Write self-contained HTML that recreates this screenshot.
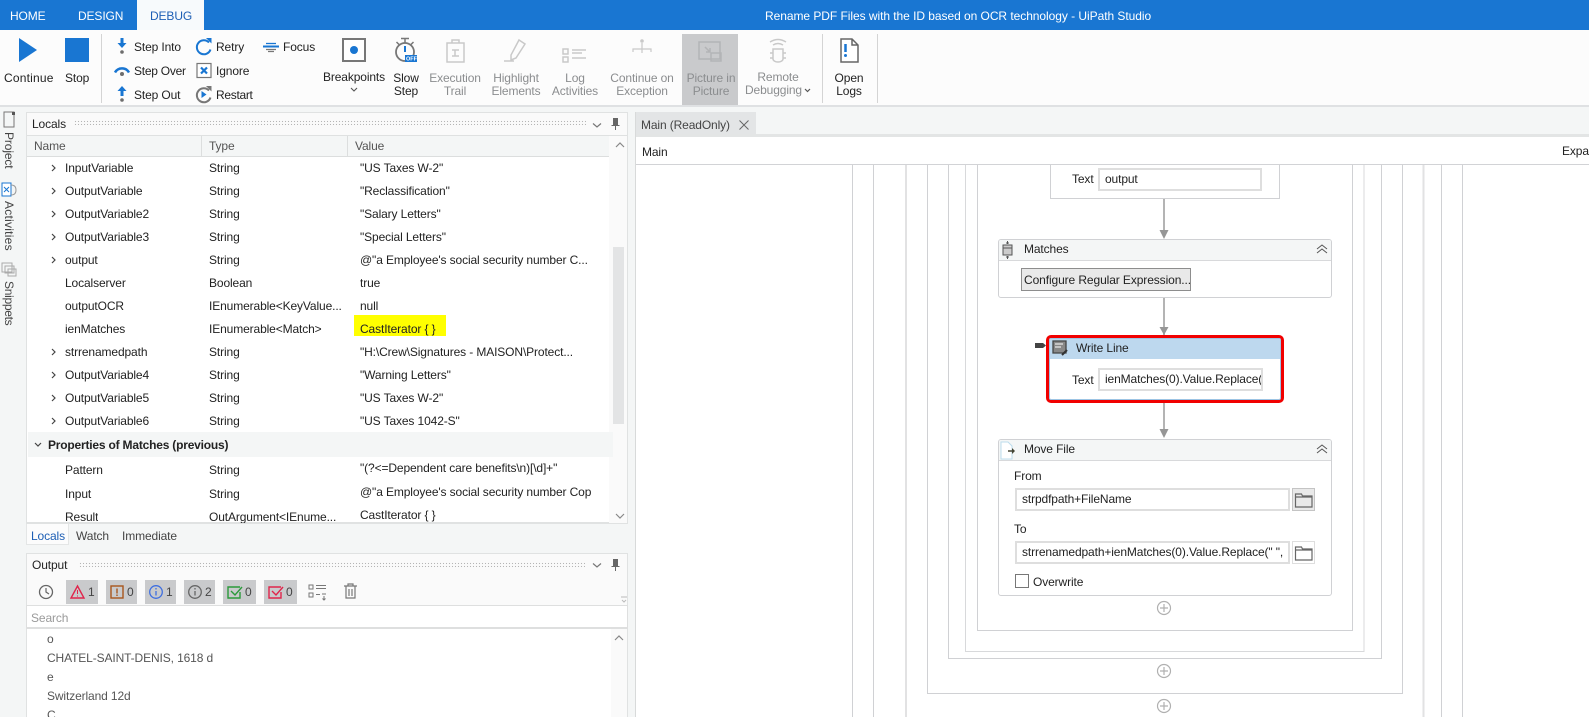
<!DOCTYPE html>
<html><head><meta charset="utf-8"><style>
html,body{margin:0;padding:0;width:1589px;height:717px;overflow:hidden;background:#f4f6f6}
body{position:relative;font-family:"Liberation Sans",sans-serif;font-size:12px;color:#222}
.t{position:absolute;white-space:nowrap;line-height:16px;letter-spacing:-.12px}
.c{transform:translateX(-50%);text-align:center;line-height:13px}
.d{color:#8b8d8f}
.b{position:absolute}
.g{position:absolute;height:5px;background-image:radial-gradient(#b5b5b5 .6px,transparent .8px);background-size:3px 3px}
svg{position:absolute;left:0;top:0}
.in{position:absolute;background:#fff;border:2px solid #dedede;box-sizing:border-box;overflow:hidden;white-space:nowrap;line-height:19px;padding-left:5px;letter-spacing:-.12px}
.tb{position:absolute;top:580px;height:24px;background:#c9cacc}
</style></head><body>
<!-- title -->
<div class="b" style="left:0;top:0;width:1589px;height:30px;background:#1976d2"></div>
<div class="b" style="left:137px;top:0;width:67px;height:30px;background:#f7fafc"></div>
<div class="t" style="left:10px;top:8px;color:#fff">HOME</div>
<div class="t" style="left:78px;top:8px;color:#fff">DESIGN</div>
<div class="t" style="left:150px;top:8px;color:#1e5fb5">DEBUG</div>
<div class="t" style="left:765px;top:8px;color:#fff;letter-spacing:-.05px">Rename PDF Files with the ID based on OCR technology - UiPath Studio</div>
<!-- ribbon -->
<div class="b" style="left:0;top:30px;width:1589px;height:75px;background:#fcfcfc;border-bottom:2px solid #dfe1e3"></div>
<div class="b" style="left:682px;top:34px;width:56px;height:71px;background:#c9cacc"></div>
<div class="b" style="left:101px;top:34px;width:1px;height:69px;background:#d4d4d4"></div>
<div class="b" style="left:822px;top:34px;width:1px;height:69px;background:#d4d4d4"></div>
<div class="b" style="left:877px;top:34px;width:1px;height:69px;background:#d4d4d4"></div>

<div class="t" style="left:4px;top:70px;letter-spacing:.2px">Continue</div>
<div class="t" style="left:65px;top:70px">Stop</div>
<div class="t" style="left:134px;top:39px">Step Into</div>
<div class="t" style="left:134px;top:63px;letter-spacing:-.25px">Step Over</div>
<div class="t" style="left:134px;top:87px">Step Out</div>
<div class="t" style="left:216px;top:39px">Retry</div>
<div class="t" style="left:216px;top:63px">Ignore</div>
<div class="t" style="left:216px;top:87px;letter-spacing:-.3px">Restart</div>
<div class="t" style="left:283px;top:39px">Focus</div>
<div class="t c" style="left:354px;top:71px">Breakpoints</div>
<div class="t c" style="left:406px;top:72px">Slow<br>Step</div>
<div class="t c d" style="left:455px;top:72px">Execution<br>Trail</div>
<div class="t c d" style="left:516px;top:72px">Highlight<br>Elements</div>
<div class="t c d" style="left:575px;top:72px">Log<br>Activities</div>
<div class="t c d" style="left:642px;top:72px">Continue on<br>Exception</div>
<div class="t c d" style="left:711px;top:72px">Picture in<br>Picture</div>
<div class="t c d" style="left:778px;top:71px">Remote</div>
<div class="t d" style="left:745px;top:84px;line-height:13px">Debugging</div>
<div class="t c" style="left:849px;top:72px">Open<br>Logs</div>

<!-- left strip labels -->
<div class="t" style="left:1px;top:132px;writing-mode:vertical-rl;line-height:16px;color:#444">Project</div>
<div class="t" style="left:1px;top:201px;writing-mode:vertical-rl;line-height:16px;color:#444;letter-spacing:.25px">Activities</div>
<div class="t" style="left:1px;top:281px;writing-mode:vertical-rl;line-height:16px;color:#444;letter-spacing:-.3px">Snippets</div>

<!-- Locals panel -->
<div class="b" style="left:26px;top:112px;width:602px;height:412px;background:#fff;box-sizing:border-box;border:1px solid #e0e2e2;border-width:1px 1px 2px 1px"></div>
<div class="b" style="left:27px;top:113px;width:600px;height:22px;background:#fafafa;border-bottom:1px solid #dfe1e1"></div>
<div class="t" style="left:32px;top:116px">Locals</div>
<div class="g" style="left:74px;top:120px;width:512px"></div>
<div class="b" style="left:27px;top:136px;width:582px;height:20px;background:#f4f6f6;border-bottom:1px solid #dcdede"></div>
<div class="b" style="left:201px;top:136px;width:1px;height:20px;background:#dcdede"></div>
<div class="b" style="left:347px;top:136px;width:1px;height:20px;background:#dcdede"></div>
<div class="t" style="left:34px;top:138px;color:#555">Name</div>
<div class="t" style="left:209px;top:138px;color:#555">Type</div>
<div class="t" style="left:355px;top:138px;color:#555">Value</div>
<div class="b" style="left:609px;top:136px;width:18px;height:387px;background:#fafafa"></div>
<div class="b" style="left:613px;top:247px;width:11px;height:177px;background:#e3e4e5"></div>
<div class="b" style="left:354px;top:315px;width:92px;height:21px;background:#ffff00"></div>
<div class="b" style="left:28px;top:432px;width:585px;height:25px;background:#f4f6f6"></div>

<div class="t" style="left:65px;top:160px">InputVariable</div><div class="t" style="left:209px;top:160px">String</div><div class="t" style="left:360px;top:160px">"US Taxes W-2"</div>
<div class="t" style="left:65px;top:183px">OutputVariable</div><div class="t" style="left:209px;top:183px">String</div><div class="t" style="left:360px;top:183px">"Reclassification"</div>
<div class="t" style="left:65px;top:206px">OutputVariable2</div><div class="t" style="left:209px;top:206px">String</div><div class="t" style="left:360px;top:206px">"Salary Letters"</div>
<div class="t" style="left:65px;top:229px">OutputVariable3</div><div class="t" style="left:209px;top:229px">String</div><div class="t" style="left:360px;top:229px">"Special Letters"</div>
<div class="t" style="left:65px;top:252px">output</div><div class="t" style="left:209px;top:252px">String</div><div class="t" style="left:360px;top:252px">@"a Employee's social security number C...</div>
<div class="t" style="left:65px;top:275px">Localserver</div><div class="t" style="left:209px;top:275px">Boolean</div><div class="t" style="left:360px;top:275px">true</div>
<div class="t" style="left:65px;top:298px">outputOCR</div><div class="t" style="left:209px;top:298px">IEnumerable&lt;KeyValue...</div><div class="t" style="left:360px;top:298px">null</div>
<div class="t" style="left:65px;top:321px">ienMatches</div><div class="t" style="left:209px;top:321px">IEnumerable&lt;Match&gt;</div><div class="t" style="left:360px;top:321px">CastIterator { }</div>
<div class="t" style="left:65px;top:344px">strrenamedpath</div><div class="t" style="left:209px;top:344px">String</div><div class="t" style="left:360px;top:344px">"H:\Crew\Signatures - MAISON\Protect...</div>
<div class="t" style="left:65px;top:367px">OutputVariable4</div><div class="t" style="left:209px;top:367px">String</div><div class="t" style="left:360px;top:367px">"Warning Letters"</div>
<div class="t" style="left:65px;top:390px">OutputVariable5</div><div class="t" style="left:209px;top:390px">String</div><div class="t" style="left:360px;top:390px">"US Taxes W-2"</div>
<div class="t" style="left:65px;top:413px">OutputVariable6</div><div class="t" style="left:209px;top:413px">String</div><div class="t" style="left:360px;top:413px">"US Taxes 1042-S"</div>
<div class="t" style="left:48px;top:437px;font-weight:bold;letter-spacing:-.2px">Properties of Matches (previous)</div>
<div class="t" style="left:65px;top:462px">Pattern</div><div class="t" style="left:209px;top:462px">String</div><div class="t" style="left:360px;top:460px">"(?&lt;=Dependent care benefits\n)[\d]+"</div>
<div class="t" style="left:65px;top:486px">Input</div><div class="t" style="left:209px;top:486px">String</div><div class="t" style="left:360px;top:484px;width:231px;overflow:hidden">@"a Employee's social security number Copy</div>
<div class="t" style="left:65px;top:509px;height:14px;overflow:hidden">Result</div><div class="t" style="left:209px;top:509px;height:14px;overflow:hidden">OutArgument&lt;IEnume...</div><div class="t" style="left:360px;top:507px">CastIterator { }</div>

<!-- Locals tabs -->
<div class="b" style="left:26px;top:524px;width:43px;height:21px;background:#fcfcfc;border:1px solid #e4e6e6;border-top:0;box-sizing:border-box"></div>
<div class="t" style="left:31px;top:528px;color:#1e5fb5">Locals</div>
<div class="t" style="left:76px;top:528px;color:#444">Watch</div>
<div class="t" style="left:122px;top:528px;color:#444">Immediate</div>

<!-- Output -->
<div class="b" style="left:26px;top:553px;width:602px;height:164px;background:#fff;box-sizing:border-box;border:1px solid #e0e2e2;border-bottom:0"></div>
<div class="b" style="left:27px;top:554px;width:600px;height:51px;background:#fafafa"></div>
<div class="t" style="left:32px;top:557px">Output</div>
<div class="g" style="left:79px;top:562px;width:506px"></div>
<div class="tb" style="left:66px;width:32px"></div><div class="tb" style="left:106px;width:31px"></div><div class="tb" style="left:145px;width:31px"></div><div class="tb" style="left:184px;width:31px"></div><div class="tb" style="left:223px;width:33px"></div><div class="tb" style="left:264px;width:33px"></div>
<div class="t" style="left:88px;top:584px;color:#444">1</div>
<div class="t" style="left:127px;top:584px;color:#444">0</div>
<div class="t" style="left:166px;top:584px;color:#444">1</div>
<div class="t" style="left:205px;top:584px;color:#444">2</div>
<div class="t" style="left:245px;top:584px;color:#444">0</div>
<div class="t" style="left:286px;top:584px;color:#444">0</div>
<div class="b" style="left:26px;top:605px;width:602px;height:24px;background:#fff;border:2px solid #dedfdf;border-width:1px 1px 2px 1px;box-sizing:border-box"></div>
<div class="t" style="left:31px;top:610px;color:#9a9a9a">Search</div>
<div class="b" style="left:611px;top:629px;width:16px;height:88px;background:#fafafa"></div>
<div class="t" style="left:47px;top:631px;color:#555">o</div>
<div class="t" style="left:47px;top:650px;color:#555">CHATEL-SAINT-DENIS, 1618 d</div>
<div class="t" style="left:47px;top:669px;color:#555">e</div>
<div class="t" style="left:47px;top:688px;color:#555">Switzerland 12d</div>
<div class="t" style="left:47px;top:707px;color:#555">C</div>

<!-- Designer -->
<div class="b" style="left:635px;top:112px;width:954px;height:605px;background:#fff;border-left:1px solid #d8dada;box-sizing:border-box"></div>
<div class="b" style="left:636px;top:112px;width:953px;height:22px;background:#f4f6f6"></div>
<div class="b" style="left:636px;top:112px;width:120px;height:22px;background:#e3e5e6"></div>
<div class="b" style="left:636px;top:134px;width:953px;height:3px;background:#e3e5e5"></div>
<div class="t" style="left:641px;top:117px;color:#444">Main (ReadOnly)</div>
<div class="t" style="left:642px;top:144px">Main</div>
<div class="t" style="left:1562px;top:143px">Expan</div>
<div class="b" style="left:636px;top:164px;width:953px;height:1px;background:#d2d3d6"></div>

<svg width="1589" height="717" viewBox="0 0 1589 717" fill="none">
 <!-- nesting lines -->
 <g stroke="#d0d1d4" shape-rendering="crispEdges">
  <path d="M852.5 165V717M873.5 165V717M927.5 165V693.5H1402.5V165M948.5 165V658.5H1381.5V165M977.5 165V630.5H1352.5V165M1441.5 165V717M1462.5 165V717"/>
  <path d="M965.5 165V651.5H1364V165" stroke="#d8d9db"/>
  <path d="M1050.5 165V198.5H1279.5V165"/>
 </g>
 <g stroke="#e2e2e3" stroke-width="2" shape-rendering="crispEdges">
  <path d="M906 165V717M1423.5 165V717"/>
 </g>
 <!-- connectors -->
 <g stroke="#b4b4b4" stroke-width="2" shape-rendering="crispEdges"><path d="M1164 199V231M1164 298V335M1164 402V430"/></g>
 <g fill="#969696"><path d="M1159.500 230H1168.500L1164 239zM1159.500 429H1168.500L1164 438zM1159.500 327H1168.500L1164 335z"/></g>
 <!-- plus -->
 <g stroke="#b0b0b0" stroke-width="1.200">
  <circle cx="1164" cy="608" r="6.500"/><path d="M1160 608h8M1164 604v8"/>
  <circle cx="1164" cy="671" r="6.500"/><path d="M1160 671h8M1164 667v8"/>
  <circle cx="1164" cy="706" r="6.500"/><path d="M1160 706h8M1164 702v8"/>
 </g>

 <!-- ribbon icons -->
 <path d="M19 38L37 50L19 62z" fill="#1976d2"/>
 <rect x="65" y="38" width="24" height="24" fill="#1976d2"/>
 <g fill="#1976d2">
  <path d="M120.500 38h3v5h3l-4.500 5-4.500-5h3z"/><circle cx="122" cy="52" r="1.800" fill="#6d6d6d"/>
  <path d="M122 86l4.500 5h-3v5h-3v-5h-3z"/><circle cx="122" cy="100" r="1.800" fill="#6d6d6d"/>
  <circle cx="122" cy="74" r="2" fill="#6d6d6d"/>
 </g>
 <path d="M115 72.500a8 8 0 0 1 14 0" stroke="#1976d2" stroke-width="2.500"/>
 <path d="M209 42.500a7 7 0 1 0 1.500 7" stroke="#1976d2" stroke-width="2"/><path d="M206 38h5.500v5.500z" fill="#1976d2"/>
 <rect x="197" y="63.500" width="14" height="14" stroke="#777" stroke-width="1.200" fill="#fff"/>
 <path d="M201 67.500l6 6M207 67.500l-6 6" stroke="#1976d2" stroke-width="2.200"/>
 <path d="M209 90.500a7 7 0 1 0 1.500 7" stroke="#777" stroke-width="2"/><path d="M206 86h5.500v5.500z" fill="#777"/><path d="M201.500 91l5 3.500-5 3.500z" fill="#1976d2"/>
 <g stroke="#1976d2" stroke-width="1.300"><path d="M266 43.500h10"/><path d="M263 46.500h16" stroke-width="2"/><path d="M266 49.500h10M268 51.500h6" stroke="#777"/></g>
 <rect x="343" y="39" width="22" height="22" stroke="#777" stroke-width="2" fill="#fff"/><circle cx="354" cy="50" r="4" fill="#1976d2"/>
 <path d="M351 88l3 3 3-3" stroke="#555" stroke-width="1.100"/>
 <circle cx="405" cy="52" r="9" stroke="#777" stroke-width="1.800"/><path d="M401 38.500h8M405 39v4M396.500 42l2.500 2.500M413.500 42l-2.500 2.500" stroke="#777" stroke-width="1.500"/><path d="M405 46v6" stroke="#1976d2" stroke-width="2"/><rect x="405" y="55" width="12" height="7" fill="#1976d2"/>
 <text x="406" y="60.500" font-family="Liberation Sans" font-size="5.500" font-weight="bold" fill="#fff">OFF</text>
 <g stroke="#c9c9c9" stroke-width="1.500">
  <path d="M447 43h17v19h-17zM452 43v-3h7v3M452 50h7M452 56h7M455 50v6"/>
  <path d="M519 40l6 4-9 14-5 2 0-5zM504 61h10"/>
  <path d="M563 49h5v5h-5zM563 57h5v5h-5zM572 50h14M572 53h10M572 58h14"/>
  <path d="M642 43v6M633 52v-3h18v3M642 49v4" stroke-width="1.200"/>
  <path d="M699 42h21v17h-21z" stroke="#b3b4b6"/><path d="M711 53h10v8h-10zM705 47l5 5M710 48v4h-4" stroke="#b3b4b6"/>
  <path d="M770 42q8-5 16 0M773 45q5-3 10 0"/><path d="M773 49h10v10a5 3 0 0 1-10 0zM770 53h3M783 53h3M770 58h3M783 58h3"/>
 </g>
 <circle cx="642" cy="41" r="1.800" fill="#c9c9c9"/>
 <path d="M805 89l2.500 2.500 2.500-2.500" stroke="#555" stroke-width="1.200"/>
 <path d="M841 39h11l6 6v17h-17zM852 39v6h6" stroke="#666" stroke-width="1.500" fill="#fff"/>
 <path d="M845.500 44v8" stroke="#1976d2" stroke-width="2.500"/><circle cx="845.500" cy="55.500" r="1.500" fill="#1976d2"/>

 <!-- side strip icons -->
 <path d="M4 112h10v15h-10z" stroke="#777"/><path d="M12 112h3v3h-3z" fill="#555"/>
 <rect x="2" y="183" width="9" height="13" stroke="#1976d2" fill="#fff"/><path d="M4 187l5 5M9 187l-5 5" stroke="#1976d2"/><path d="M11 185q5 0 5 5t-5 5" stroke="#999"/>
 <path d="M2 263h10v9h-10z M5 266h9v7h-9z M8 269h8v7h-8z" stroke="#aaa" fill="#f4f6f6"/>

 <!-- locals chevrons -->
 <g stroke="#444" stroke-width="1.200">
  <path d="M52 165l3 3-3 3M52 188l3 3-3 3M52 211l3 3-3 3M52 234l3 3-3 3M52 257l3 3-3 3M52 349l3 3-3 3M52 372l3 3-3 3M52 395l3 3-3 3M52 418l3 3-3 3M35 443l3 3 3-3"/>
 </g>
 <g stroke="#777" stroke-width="1.200">
  <path d="M593 123.500l4 3.500 4-3.500"/>
  <path d="M616 147l4-4 4 4" stroke="#888"/>
  <path d="M616 514l4 4 4-4" stroke="#888"/>
  <path d="M593 563.500l4 3.500 4-3.500"/>
  <path d="M615 640l4-4 4 4" stroke="#888"/>
 </g>
 <g fill="#666"><path d="M613 118h5v7h-5zM611.500 125h8v1h-8zM615 126h1v4h-1z"/><path d="M613 559h5v7h-5zM611.500 566h8v1h-8zM615 567h1v4h-1z"/></g>
 <path d="M622 597h6M623 600l2 2 2-2" stroke="#bbb" stroke-width="1" transform="translate(-1 0)"/>

 <!-- output toolbar icons -->
 <circle cx="46" cy="592" r="6.500" stroke="#666" stroke-width="1.300"/><path d="M46 588v4l3 2" stroke="#666" stroke-width="1.200"/>
 <path d="M77.500 586L84 598H71z" stroke="#e0244b" stroke-width="1.400"/><path d="M77.500 590v4M77.500 595.500v1" stroke="#e0244b"/>
 <rect x="111" y="586" width="12" height="12" stroke="#a8561c" stroke-width="1.400"/><path d="M117 588.500v5M117 594.500v1.500" stroke="#a8561c" stroke-width="1.400"/>
 <circle cx="156" cy="592" r="6.300" stroke="#3f6fe0" stroke-width="1.300"/><path d="M156 591v4.500M156 588v1.500" stroke="#3f6fe0" stroke-width="1.300"/>
 <circle cx="195" cy="592" r="6.300" stroke="#666" stroke-width="1.300"/><path d="M195 591v4.500M195 588v1.500" stroke="#666" stroke-width="1.300"/>
 <path d="M240 587h-12v11h12v-6" stroke="#2a9a3a" stroke-width="1.400"/><path d="M231 591l4 4 7-8" stroke="#2a9a3a" stroke-width="1.400"/>
 <path d="M281 587h-12v11h12v-6" stroke="#e0244b" stroke-width="1.400"/><path d="M272 591l4 4 7-8" stroke="#e0244b" stroke-width="1.400"/>
 <g stroke="#777"><path d="M309 585h4v4h-4zM309 593h4v4h-4zM316 585.500h10M316 588.500h10M316 594.500h4M322 594h4"/><path d="M324 596v4M322.500 598.500l1.500 1.500 1.500-1.500"/></g>
 <g stroke="#777" stroke-width="1.200"><path d="M344 586h13M346 586v12h9v-12M348 586v-2h5v2M349 589v7M352 589v7"/></g>
 <path d="M739.500 120.500l9 9M748.500 120.500l-9 9" stroke="#666"/>
</svg>

<!-- Text card bottom -->
<div class="t" style="left:1072px;top:171px">Text</div>
<div class="in" style="left:1098px;top:168px;width:164px;height:23px">output</div>

<!-- Matches -->
<div class="b" style="left:998px;top:239px;width:334px;height:59px;box-sizing:border-box;border:1px solid #d0d1d4;border-radius:3px;background:#fff"></div>
<div class="b" style="left:999px;top:240px;width:332px;height:20px;background:#f4f6f6;border-bottom:1px solid #d8d9db;border-radius:2px 2px 0 0"></div>
<div class="t" style="left:1024px;top:241px">Matches</div>
<div class="b" style="left:1021px;top:268px;width:170px;height:23px;box-sizing:border-box;border:1px solid #8d8d8d;background:#e9e9e9"></div>
<div class="t" style="left:1024px;top:272px;letter-spacing:-.1px">Configure Regular Expression...</div>

<!-- Write Line -->
<div class="b" style="left:1046px;top:335px;width:238px;height:68px;box-sizing:border-box;border:3px solid #f10000;border-radius:5px;background:#fff;box-shadow:inset 0 0 0 1px #9cc4e4"></div>
<div class="b" style="left:1050px;top:339px;width:230px;height:20px;background:#bdd8ee"></div>
<div class="t" style="left:1076px;top:340px">Write Line</div>
<div class="t" style="left:1072px;top:372px">Text</div>
<div class="in" style="left:1098px;top:368px;width:165px;height:23px">ienMatches(0).Value.Replace(</div>

<!-- Move File -->
<div class="b" style="left:998px;top:439px;width:334px;height:157px;box-sizing:border-box;border:1px solid #d0d1d4;border-radius:3px;background:#fff"></div>
<div class="b" style="left:999px;top:440px;width:332px;height:20px;background:#f4f6f6;border-bottom:1px solid #d8d9db;border-radius:2px 2px 0 0"></div>
<div class="t" style="left:1024px;top:441px">Move File</div>
<div class="t" style="left:1014px;top:468px">From</div>
<div class="in" style="left:1015px;top:488px;width:275px;height:23px">strpdfpath+FileName</div>
<div class="b" style="left:1292px;top:488px;width:23px;height:23px;box-sizing:border-box;border:1px solid #c4c4c4;background:#e9e9e9"></div>
<div class="t" style="left:1014px;top:521px">To</div>
<div class="in" style="left:1015px;top:541px;width:275px;height:23px">strrenamedpath+ienMatches(0).Value.Replace(" ",</div>
<div class="b" style="left:1292px;top:541px;width:23px;height:23px;box-sizing:border-box;border:1px solid #dedede;background:#fff"></div>
<div class="b" style="left:1015px;top:574px;width:14px;height:14px;box-sizing:border-box;border:1px solid #777;background:#fff"></div>
<div class="t" style="left:1033px;top:574px">Overwrite</div>

<svg width="1589" height="717" viewBox="0 0 1589 717" fill="none">
 <!-- designer card icons -->
 <rect x="1003" y="245" width="9" height="10" stroke="#555" fill="#ccc"/><path d="M1007.500 241v3M1006 243h3M1007.500 256v3M1006 257h3M1003 248h9" stroke="#555"/>
 <path d="M1317 249l5-4 5 4M1317 253l5-4 5 4" stroke="#555"/>
 <path d="M1317 449l5-4 5 4M1317 453l5-4 5 4" stroke="#555"/>
 <path d="M1053 341h13v12h-13z" stroke="#444" stroke-width="1.300" fill="#888"/><path d="M1055 344h8M1055 347h6" stroke="#fff"/><path d="M1062 355l5-5" stroke="#333" stroke-width="2"/>
 <path d="M1035 343h8l3 2.500-3 2.500h-8z" fill="#444"/>
 <path d="M1001 442h7l4 4v13h-11z" stroke="#bcdcec" fill="#fff"/><path d="M1008 451h6" stroke="#443" stroke-width="1.500"/><path d="M1012 448l3 3-3 3z" fill="#443"/>
 <g stroke="#666" stroke-width="1.200">
  <path d="M1295.500 494h6l1 2h9.500v11h-16.500z" fill="#e9e9e9"/><path d="M1295.500 497h16.500"/>
  <path d="M1295.500 547h6l1 2h9.500v11h-16.500z" fill="#fff"/><path d="M1295.500 550h16.500"/>
 </g>
</svg>
</body></html>
